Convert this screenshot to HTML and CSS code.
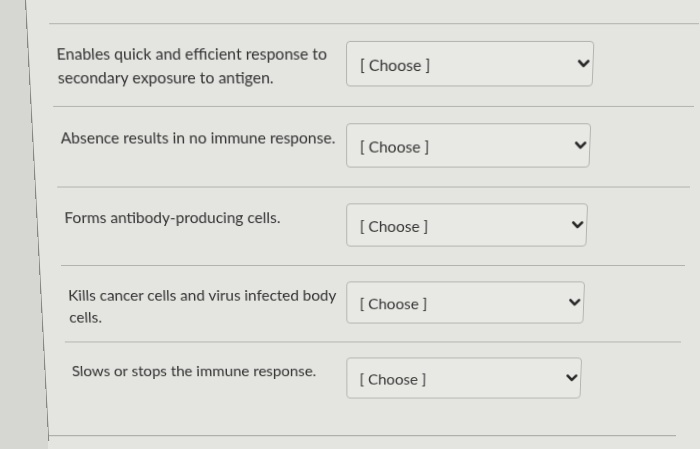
FILE: index.html
```html
<!DOCTYPE html>
<html lang="en">
<head>
<meta charset="utf-8">
<title>Matching</title>
<link rel="stylesheet" href="styles.css">
</head>
<body>
<div class="quiz">
  <div class="rows">
    <div class="row">
      <div class="label">Enables quick and efficient response to secondary exposure to antigen.</div>
      <div class="select"><span>[ Choose ]</span><svg class="chev" viewBox="0 0 12 8" width="12" height="8"><path d="M1.5 1.5 L6 6 L10.5 1.5" fill="none" stroke="#2a2a2a" stroke-width="2.6" stroke-linecap="round" stroke-linejoin="round"/></svg></div>
    </div>
    <div class="row">
      <div class="label">Absence results in no immune response.</div>
      <div class="select"><span>[ Choose ]</span><svg class="chev" viewBox="0 0 12 8" width="12" height="8"><path d="M1.5 1.5 L6 6 L10.5 1.5" fill="none" stroke="#2a2a2a" stroke-width="2.6" stroke-linecap="round" stroke-linejoin="round"/></svg></div>
    </div>
    <div class="row">
      <div class="label">Forms antibody-producing cells.</div>
      <div class="select"><span>[ Choose ]</span><svg class="chev" viewBox="0 0 12 8" width="12" height="8"><path d="M1.5 1.5 L6 6 L10.5 1.5" fill="none" stroke="#2a2a2a" stroke-width="2.6" stroke-linecap="round" stroke-linejoin="round"/></svg></div>
    </div>
    <div class="row">
      <div class="label">Kills cancer cells and virus infected body cells.</div>
      <div class="select"><span>[ Choose ]</span><svg class="chev" viewBox="0 0 12 8" width="12" height="8"><path d="M1.5 1.5 L6 6 L10.5 1.5" fill="none" stroke="#2a2a2a" stroke-width="2.6" stroke-linecap="round" stroke-linejoin="round"/></svg></div>
    </div>
    <div class="row">
      <div class="label">Slows or stops the immune response.</div>
      <div class="select"><span>[ Choose ]</span><svg class="chev" viewBox="0 0 12 8" width="12" height="8"><path d="M1.5 1.5 L6 6 L10.5 1.5" fill="none" stroke="#2a2a2a" stroke-width="2.6" stroke-linecap="round" stroke-linejoin="round"/></svg></div>
    </div>
  </div>
</div>
</body>
</html>
```
FILE: styles.css
```css
html, body {
  margin: 0;
  padding: 0;
}
body {
  background: linear-gradient(90deg, #d6d7d3 0, #d6d7d3 48px, #e4e5e1 48px);
  font-family: Lato, "Open Sans", "Liberation Sans", sans-serif;
  color: #323332;
  width: 700px;
  height: 449px;
  overflow: hidden;
}
/* the reference is a photo of a screen, tilted slightly away at the bottom */
.quiz {
  margin-left: 25px;
  width: 675px;
  height: 449px;
  background: #e4e5e1;
  border-left: 1px solid #878884;
  box-sizing: border-box;
  transform-origin: 328px 0;
  transform: perspective(500px) rotateX(-4.6deg) scaleY(1.06);
}
.rows {
  padding-top: 22px;
  padding-bottom: 21px;
  border-bottom: 1px solid #9c9d99;
}
.row {
  margin-left: 22px;
  border-top: 1px solid #b2b3af;
  display: flex;
  align-items: flex-start;
  gap: 8px;
  padding: 16px 0 19px 6px;
  height: 44px;
}
.row:first-child .label {
  padding-top: 0;
}
.label {
  flex: 0 0 284px;
  font-size: 16px;
  line-height: 23px;
  padding-top: 2px;
}
.select {
  flex: 0 0 auto;
  width: 250px;
  height: 44px;
  box-sizing: border-box;
  border: 1px solid #b3b4b0;
  border-radius: 4px;
  background: #e8e9e5;
  display: flex;
  align-items: center;
  justify-content: space-between;
  padding: 0 3px 0 13px;
  font-size: 16px;
  color: #363736;
}
.chev {
  display: block;
}
```
